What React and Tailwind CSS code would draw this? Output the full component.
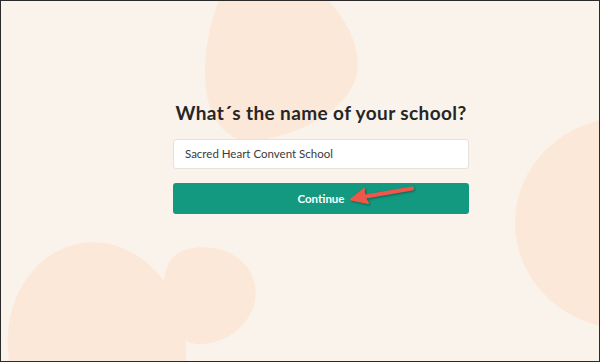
export default function App() {
  return (
    <div className="relative w-[600px] h-[362px] overflow-hidden border border-[#2a2a2a] bg-[#f9f3ec] font-['Lato','Liberation_Sans',sans-serif]">
      <svg className="absolute inset-0" width="600" height="362" viewBox="0 0 600 362" fill="#fce8d8">
        <path d="M222 -10 C 208 20, 200 60, 206 95 C 212 125, 232 142, 252 140 C 290 136, 340 115, 354 80 C 364 50, 345 15, 318 -10 Z" />
        <ellipse cx="626" cy="222" rx="112" ry="106" />
        <ellipse cx="96" cy="345" rx="89" ry="104" transform="rotate(-8 96 345)" />
        <path d="M168 262 C 176 246, 200 244, 218 248 C 246 256, 258 278, 254 300 C 248 326, 224 344, 196 343 C 176 342, 164 320, 162 300 C 161 284, 163 272, 168 262 Z" />
      </svg>

      <div className="relative ml-[172px] w-[296px] pt-[98px]">
        <h1 className="-mx-10 whitespace-nowrap text-center text-[19px] leading-[28px] font-bold text-[#262626] tracking-[0.4px]">
          What´s the name of your school?
        </h1>
        <div className="mt-[12px] h-[30px] rounded-[3px] border border-[#e6e1dc] bg-white flex items-center px-[11px] text-[11.5px] text-[#3a3a3a]">
          Sacred Heart Convent School
        </div>
        <div className="relative mt-[14px] h-[31px] rounded-[3px] bg-[#13997f] flex items-center justify-center text-[11.5px] font-bold text-white">
          Continue
          <svg className="absolute left-[176px] top-[2px]" width="68" height="26" viewBox="0 0 68 26">
            <g filter="drop-shadow(1px 1.5px 1px rgba(0,0,0,0.35))">
              <line x1="63" y1="3.5" x2="14" y2="12" stroke="#f0574a" strokeWidth="4" strokeLinecap="round" />
              <path d="M2 14.5 L 15 4 Q 14 11, 19 18 Z" fill="#f0574a" stroke="#f0574a" strokeWidth="2" strokeLinejoin="round" />
            </g>
          </svg>
        </div>
      </div>
    </div>
  );
}
